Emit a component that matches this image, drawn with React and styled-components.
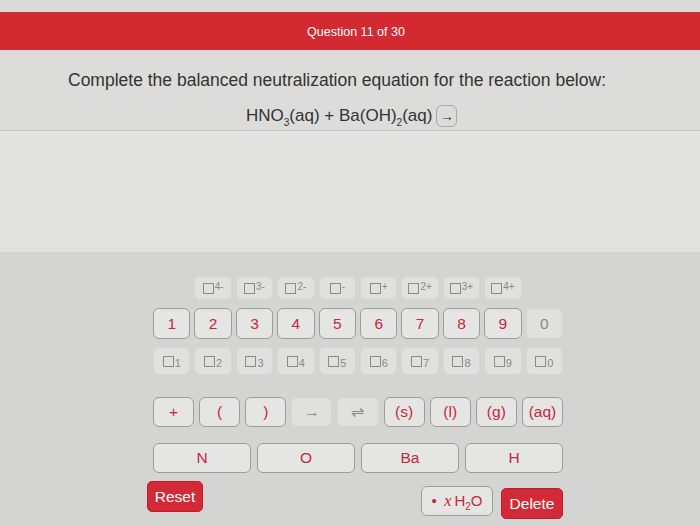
import styled, { createGlobalStyle } from "styled-components";

const GlobalStyle = createGlobalStyle`
  html, body {
    margin: 0;
    padding: 0;
    background: #d8d8d6;
    font-family: "Liberation Sans", Arial, sans-serif;
  }
  #root {
    width: 700px;
    height: 526px;
    overflow: hidden;
  }
`;

const Page = styled.div`
  width: 700px;
  height: 526px;
  display: flex;
  flex-direction: column;
  background: #d8d8d6;
`;

const TopStrip = styled.div`
  height: 12px;
  background: #dadad8;
`;

const Header = styled.div`
  height: 38px;
  background: #d22a30;
  color: #fff;
  font-size: 12.5px;
  display: flex;
  align-items: center;
  justify-content: center;
  padding-left: 12px;
  padding-top: 2px;
  box-sizing: border-box;
`;

const QuestionArea = styled.div`
  height: 81px;
  background: #dcdcda;
  border-bottom: 1px solid #c4c4c2;
  padding: 20px 0 0 68px;
  box-sizing: border-box;
  color: #333;
`;

const Prompt = styled.div`
  font-size: 17.5px;
  line-height: 20px;
`;

const Equation = styled.div`
  margin-top: 15px;
  margin-left: 178px;
  font-size: 17px;
  display: flex;
  align-items: center;
  gap: 2px;

  sub {
    font-size: 10px;
    vertical-align: -5px;
    line-height: 0;
  }
`;

const ArrowBox = styled.span`
  width: 19px;
  height: 20px;
  border: 1px solid #a8a8a6;
  border-radius: 6px;
  display: inline-flex;
  align-items: center;
  justify-content: center;
  font-size: 14px;
  color: #333;
  margin-left: 2px;
`;

const Workspace = styled.div`
  height: 121px;
  background: #e2e2e0;
`;

const Keypad = styled.div`
  flex: 1;
  background: #d4d4d2;
  padding: 24px 0 0 153px;
  display: flex;
  flex-direction: column;
  gap: 8px;
`;

const Row = styled.div`
  width: 410px;
  display: grid;
  grid-template-columns: repeat(${(p) => p.cols}, 1fr);
  gap: ${(p) => p.gap || 4}px;
  margin-top: ${(p) => p.top || 0}px;
`;

const Key = styled.button`
  height: ${(p) => p.h || 30}px;
  padding: 0;
  font-family: "Liberation Sans", Arial, sans-serif;
  font-size: 15.5px;
  border-radius: 6px;
  background: ${(p) => (p.off ? "#e0e0de" : "#e5e5e3")};
  border: 1px solid ${(p) => (p.off ? "#d6d6d4" : "#9c9c9a")};
  color: ${(p) => (p.off ? "#8a8a8a" : "#c42840")};
  display: flex;
  align-items: center;
  justify-content: center;
  grid-column: ${(p) => p.col || "auto"};
`;

const Box = styled.span`
  width: 9px;
  height: 9px;
  border: 1px solid #8a8a8a;
  display: inline-block;
`;

const Sup = styled.span`
  font-size: 10px;
  align-self: flex-start;
  margin-top: 4px;
  margin-left: 1px;
`;

const Sub = styled.span`
  font-size: 11px;
  align-self: flex-end;
  margin-bottom: 5px;
  margin-left: 1px;
`;

const Bottom = styled.div`
  width: 416px;
  margin-left: -6px;
  display: flex;
  align-items: flex-start;
  gap: 8px;
`;

const RedButton = styled.button`
  height: 31px;
  width: ${(p) => p.w}px;
  background: #d22a36;
  border: 1px solid #b81f2c;
  border-radius: 5px;
  color: #fff;
  font-family: "Liberation Sans", Arial, sans-serif;
  font-size: 15.5px;
  padding: 0;
  margin-top: ${(p) => p.top || 0}px;
`;

const Spacer = styled.div`
  flex: 1;
`;

const WaterKey = styled.button`
  height: 30px;
  width: 72px;
  border: 1px solid #9c9c9a;
  border-radius: 6px;
  background: #e5e5e3;
  color: #c42840;
  font-family: "Liberation Sans", Arial, sans-serif;
  font-size: 15px;
  padding: 0;
  margin-top: 5px;

  i {
    font-family: "Liberation Serif", serif;
    font-size: 17px;
    margin: 0 3px;
  }
  sub {
    font-size: 10px;
  }
`;

const charges = ["4-", "3-", "2-", "-", "+", "2+", "3+", "4+"];
const numbers = ["1", "2", "3", "4", "5", "6", "7", "8", "9"];
const subs = ["1", "2", "3", "4", "5", "6", "7", "8", "9", "0"];

export default function App() {
  return (
    <>
      <GlobalStyle />
      <Page>
        <TopStrip />
        <Header>Question 11 of 30</Header>
        <QuestionArea>
          <Prompt>Complete the balanced neutralization equation for the reaction below:</Prompt>
          <Equation>
            <span>
              HNO<sub>3</sub>(aq) + Ba(OH)<sub>2</sub>(aq)
            </span>
            <ArrowBox>→</ArrowBox>
          </Equation>
        </QuestionArea>
        <Workspace />
        <Keypad>
          <Row cols={10}>
            {charges.map((c, i) => (
              <Key key={c} off h={24} col={i === 0 ? "2" : "auto"}>
                <Box />
                <Sup>{c}</Sup>
              </Key>
            ))}
          </Row>
          <Row cols={10}>
            {numbers.map((n) => (
              <Key key={n} h={31}>{n}</Key>
            ))}
            <Key off h={31}>0</Key>
          </Row>
          <Row cols={10}>
            {subs.map((n) => (
              <Key key={n} off h={28}>
                <Box />
                <Sub>{n}</Sub>
              </Key>
            ))}
          </Row>
          <Row cols={9} top={14} gap={5}>
            <Key>+</Key>
            <Key>(</Key>
            <Key>)</Key>
            <Key off>→</Key>
            <Key off>⇌</Key>
            <Key>(s)</Key>
            <Key>(l)</Key>
            <Key>(g)</Key>
            <Key>(aq)</Key>
          </Row>
          <Row cols={4} top={8} gap={6}>
            <Key>N</Key>
            <Key>O</Key>
            <Key>Ba</Key>
            <Key>H</Key>
          </Row>
          <Bottom>
            <RedButton w={56}>Reset</RedButton>
            <Spacer />
            <WaterKey>
              • <i>x</i>H<sub>2</sub>O
            </WaterKey>
            <RedButton w={62} top={7}>Delete</RedButton>
          </Bottom>
        </Keypad>
      </Page>
    </>
  );
}
